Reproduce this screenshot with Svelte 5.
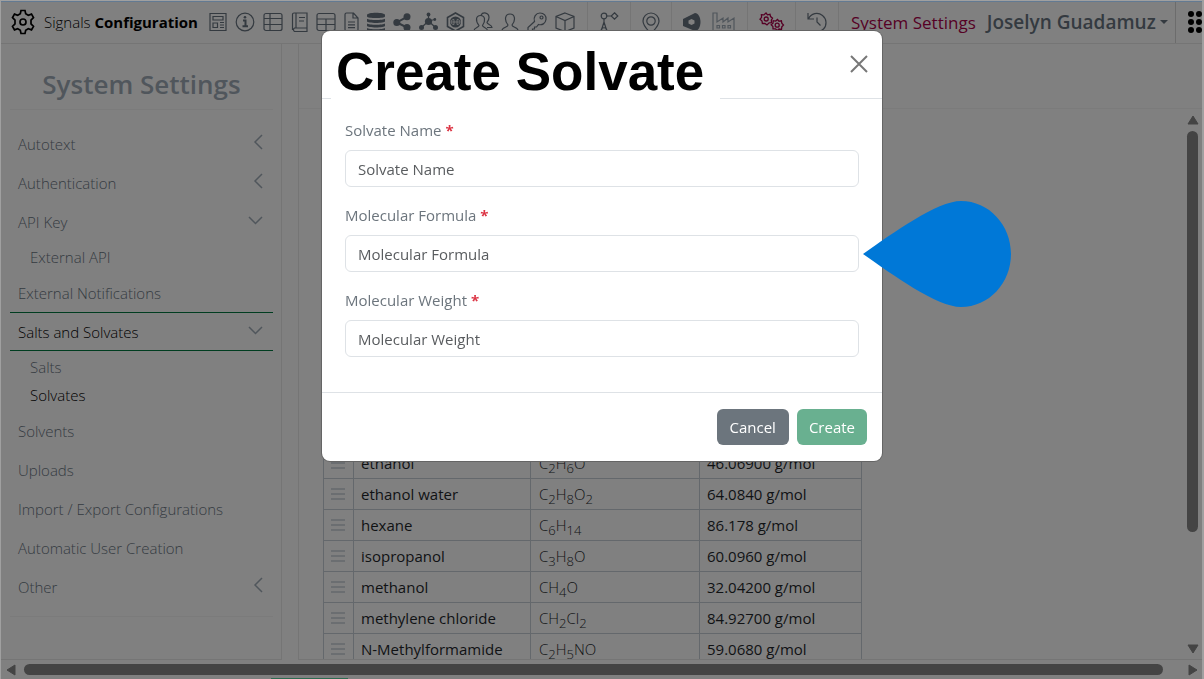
<script>
  const strip = [
    { name: 'Templates', w: 18, body: '<path d="M1 1.500h16v17H1zM4 4.500h10v3.500H4zM4 11h4.500v4.500H4zM11 10.500h4M11 13h4M11 15.500h4" />' },
    { name: 'Information', w: 20, body: '<circle cx="10" cy="10" r="8.800"/><path d="M8 8.500h2.500v5.500M7.500 14.300h5.500" stroke-width="2"/><circle cx="10" cy="5.300" r="1.300" fill="currentColor" stroke="none"/>' },
    { name: 'Tables', w: 20, body: '<rect x="1" y="1.500" width="18" height="17" rx="2"/><path d="M1 6.500h18M1 12.500h18M7 1.500v17"/>' },
    { name: 'Notebook', w: 17, body: '<path d="M3 1h13v15H3.500a2 2 0 0 0 0 3.500H16V16M1.500 18V2.500A1.500 1.500 0 0 1 3 1M5 1v15M8 5.500h6M8 9h5"/>' },
    { name: 'Worksheets', w: 20, body: '<rect x="1" y="1.500" width="18" height="17" rx="2"/><path d="M1 7h18M1 12.500h18M10 7v11.500"/>' },
    { name: 'Documents', w: 15, body: '<path d="M2.500 1H9.500l4.500 5v11.500a1.500 1.500 0 0 1-1.500 1.500h-10A1.500 1.500 0 0 1 1 17.500v-15A1.500 1.500 0 0 1 2.500 1zM9 1v5h5M4 10h7M4 12.800h7M4 15.600h7"/>' },
    { name: 'Databases', w: 18, body: '<g fill="currentColor" stroke="none"><path d="M0 3C0 0 18 0 18 3v1.500C18 6.500 0 6.500 0 4.500z"/><path d="M0 6.700c2 1.700 16 1.700 18 0v2.500c0 2.300-18 2.300-18 0z"/><path d="M0 11.400c2 1.700 16 1.700 18 0v2.300c0 2.300-18 2.300-18 0z"/><path d="M0 15.900c2 1.700 16 1.700 18 0v2c0 2.600-18 2.600-18 0z"/></g>' },
    { name: 'Sharing', w: 18, body: '<g fill="currentColor" stroke="none"><circle cx="3.800" cy="10.500" r="3.500"/><circle cx="14" cy="4.800" r="3.500"/><circle cx="14" cy="15.500" r="3.500"/></g><path d="M14 4.800 3.800 10.500 14 15.500" stroke-width="2"/>' },
    { name: 'Structures', w: 19, body: '<g fill="currentColor" stroke="none"><circle cx="9.500" cy="9.500" r="3.600"/><circle cx="9.500" cy="2.500" r="1.900"/><circle cx="2.500" cy="15.500" r="2.500"/><circle cx="16.500" cy="15.500" r="2.500"/><circle cx="15.800" cy="7.500" r="1.400"/></g><path d="M9.500 9V2.500M9.500 9l-7 6.500M9.500 9l7 6.500M9.500 9l6.300-1.500" stroke-width="1.200"/>' },
    { name: 'Compounds', w: 19, body: '<path d="m9.500 1 8 4.500v9l-8 4.500-8-4.500v-9z" stroke-width="1.600"/><circle cx="9.500" cy="10" r="5.500" fill="currentColor" stroke="none"/><path d="M8 7.500v5c-4 0-4-5 0-5zM11 7.500v5c4 0 4-5 0-5zM5 10h9" stroke="#808080" stroke-width=".8"/>' },
    { name: 'Groups', w: 20, body: '<path d="M1 18.500c0-3 5-3 5-5-4-5-3-10 1.500-10s5.500 5 2 10c0 2 5 2 5 5zM8 3c2-3.500 8-2.500 8 2.500 0 2.500-1.500 4-2 5 0 2 5 2 5 5h-5"/>' },
    { name: 'Users', w: 18, body: '<path d="M1 18.500c0-3.500 6-3 6-5.500-4-5-3-11 2-11s6 6 2 11c0 2.500 6 2 6 5.500z"/>' },
    { name: 'Access', w: 20, body: '<path d="M7.500 9.500C6 5 9 1 13 1s6.500 3 6 6.500c-.5 4-4 6-7.500 5L9.500 15H7.500v2H5.500v2H1v-3.500z"/><circle cx="14.500" cy="5.500" r="1.500"/>' },
    { name: 'Packages', w: 20, body: '<path d="m10 1 9 3.500v11.500l-9 3.500-9-3.500V4.500zM1 4.500 10 8.500l9-4M10 8.500v11"/>' }
  ];
  const groups = [
    [{ name: 'Workflow', w: 20, body: '<circle cx="5" cy="4" r="2.800"/><path d="M7.800 4H12M15.500.800 18.800 4l-3.300 3.200L12.200 4zM5 7v3M5 10l-3 9.500M5 10l3 9.500M2 19.500c0-5 6-5 6 0"/>' }],
    [{ name: 'Locations', w: 18, body: '<path d="M9 22c-3-4-8-8-8-13a8 8 0 0 1 16 0C17 14 12 18 9 22z"/><circle cx="9" cy="9" r="4.200"/>' }],
    [
      { name: 'Materials', w: 18, body: '<path d="M0 7 12 1c3 0 5.500 4 5.500 9s-2.500 9-5.500 9L0 14z" fill="currentColor" stroke="none"/><path d="m8.500 7 3 1.500v3L8.500 13l-3-1.500v-3z" fill="#808080" stroke="none"/>' },
      { name: 'Plants', w: 24, faded: true, body: '<path d="M1 19V1h4v9l6-4v4l5-4v4l6-4v13zM5 13.500h2.500v2.500H5zM10.500 13.500H13v2.500h-2.500zM16 13.500h2.500v2.500H16z"/>' }
    ],
    [{ name: 'System settings', w: 25, red: true, body: '<g stroke-width="1.300"><path d="m7 1 1.500 1.800L11 2.300l.6 2.300 1.900 1.600-1.200 2 .2 2.500-2.400.2L8 13l-2-1.600-2.600.1-.4-2.400L1 7.300l1.600-1.900-.2-2.600 2.500.1z"/><circle cx="7.200" cy="7" r="2"/><path d="m18.500 7.500 1.500 1.700 2.400-.4.400 2.400 1.700 1.800-1.700 1.800-.3 2.500-2.400-.3-1.900 1.500-1.700-1.700-2.500.1-.1-2.400-1.700-1.700 1.800-1.600.2-2.500 2.500.4z"/><circle cx="18.200" cy="13.200" r="2"/></g>' }],
    [{ name: 'History', w: 20, body: '<path d="M1 1v6h6M1.500 7C4 1 11 0 15.500 3.500s4.500 10 1 13.500-8 3.500-11 1.500M10 5.500V10l3.500 3.500"/>' }]
  ];

  const menu = [
    { label: 'Autotext', arrow: 'left' },
    { label: 'Authentication', arrow: 'left' },
    { label: 'API Key', arrow: 'down', children: ['External API'] },
    { label: 'External Notifications' },
    { label: 'Salts and Solvates', arrow: 'down', active: true, children: ['Salts', 'Solvates'] },
    { label: 'Solvents' },
    { label: 'Uploads' },
    { label: 'Import / Export Configurations' },
    { label: 'Automatic User Creation' },
    { label: 'Other', arrow: 'left' }
  ];

  const solvates = [
    ['ethanol', 'C2H6O', '46.06900 g/mol'],
    ['ethanol water', 'C2H8O2', '64.0840 g/mol'],
    ['hexane', 'C6H14', '86.178 g/mol'],
    ['isopropanol', 'C3H8O', '60.0960 g/mol'],
    ['methanol', 'CH4O', '32.04200 g/mol'],
    ['methylene chloride', 'CH2Cl2', '84.92700 g/mol'],
    ['N-Methylformamide', 'C2H5NO', '59.0680 g/mol']
  ];
  const parts = (formula) => formula.match(/\d+|\D+/g);

  const fields = [
    { id: 'name', label: 'Solvate Name' },
    { id: 'formula', label: 'Molecular Formula' },
    { id: 'weight', label: 'Molecular Weight' }
  ];
</script>

{#snippet tool(icon)}
  <button class="tool" class:red={icon.red} class:faded={icon.faded} aria-label={icon.name}>
    <svg width={icon.w} height="20" viewBox="0 0 {icon.w} 20">{@html icon.body}</svg>
  </button>
{/snippet}

<div class="page">
  <header>
    <div class="brand">
      <svg width="24" height="26" viewBox="0 0 24 26"><path d="M10 1.500h4l.7 3.300 2.600 1.500 3.200-1.200 2 3.500L20 11.200v3.600l2.500 2.600-2 3.500-3.200-1.200-2.600 1.500-.7 3.300h-4l-.7-3.300-2.600-1.500-3.200 1.200-2-3.500L4 14.800v-3.600L1.500 8.600l2-3.500 3.200 1.200 2.600-1.500z"/><circle cx="12" cy="13" r="3"/></svg>
      <span class="product">Signals <b>Configuration</b></span>
    </div>
    <nav class="tools" aria-label="Configuration areas">
      <div class="first">{#each strip as icon}{@render tool(icon)}{/each}</div>
      {#each groups as group}
        <div class="group">{#each group as icon}{@render tool(icon)}{/each}</div>
      {/each}
    </nav>
    <div class="section">System Settings</div>
    <button class="user">Joselyn Guadamuz<span class="caret"></span></button>
    <button class="apps" aria-label="Applications">
      <svg width="16" height="24" viewBox="0 0 16 24"><g fill="#000"><circle cx="3" cy="4" r="3"/><circle cx="11" cy="4" r="3"/><circle cx="3" cy="12" r="3"/><circle cx="11" cy="12" r="3"/><circle cx="3" cy="20" r="3"/><circle cx="11" cy="20" r="3"/></g></svg>
    </button>
  </header>

  <div class="body">
    <aside>
      <h2>System Settings</h2>
      <ul class="menu">
        {#each menu as item}
          <li>
            <a href="#top" class="item" class:active={item.active}>
              <span>{item.label}</span>
              {#if item.arrow === 'left'}
                <svg width="10" height="16" viewBox="0 0 10 16"><path d="M9 1 2 8l7 7"/></svg>
              {:else if item.arrow === 'down'}
                <svg width="15" height="16" viewBox="0 0 15 16"><path d="m1 5 6.500 6.500L14 5"/></svg>
              {/if}
            </a>
            {#if item.children}
              <ul class="sub">
                {#each item.children as child}
                  <li><a href="#top" class:current={child === 'Solvates'}>{child}</a></li>
                {/each}
              </ul>
            {/if}
          </li>
        {/each}
      </ul>
    </aside>
    <main>
      <div class="toolbar"></div>
      <div class="content">
        <div class="listing">
          <table>
            <tbody>
              {#each solvates as [name, formula, weight]}
                <tr>
                  <td class="grip"><svg width="14" height="14" viewBox="0 0 14 14"><path d="M0 2h14M0 7h14M0 12h14"/></svg></td>
                  <td class="name">{name}</td>
                  <td class="formula">{#each parts(formula) as part}{#if /\d/.test(part)}<sub>{part}</sub>{:else}{part}{/if}{/each}</td>
                  <td class="weight">{weight}</td>
                </tr>
              {/each}
            </tbody>
          </table>
        </div>
        <div class="vbar">
          <svg width="12" height="10" viewBox="0 0 12 10"><path d="M6 1 11 9H1z"/></svg>
          <div class="track"><div class="thumb"></div></div>
          <svg width="12" height="10" viewBox="0 0 12 10"><path d="M1 1h10L6 9z"/></svg>
        </div>
      </div>
    </main>
  </div>

  <div class="hbar">
    <svg width="10" height="12" viewBox="0 0 10 12"><path d="M9 1v10L1 6z"/></svg>
    <div class="track"><div class="thumb"></div></div>
    <svg width="10" height="12" viewBox="0 0 10 12"><path d="M1 1v10l8-5z"/></svg>
  </div>
  <div class="edge"></div>
</div>

<div class="overlay">
  <div class="dialog" role="dialog" aria-labelledby="dialog-title">
    <div class="head">
      <h1 id="dialog-title">Create Solvate</h1>
      <button class="close" aria-label="Close"><svg width="18" height="18" viewBox="0 0 18 18"><path d="m1 1 16 16M17 1 1 17"/></svg></button>
    </div>
    <form>
      {#each fields as field}
        <div class="field">
          <label for={field.id}>{field.label} <b>*</b></label>
          <input id={field.id} type="text" placeholder={field.label} />
        </div>
      {/each}
    </form>
    <div class="foot">
      <button class="cancel">Cancel</button>
      <button class="create">Create</button>
    </div>
    <svg class="pointer" width="148" height="108" viewBox="0 0 148 108"><path d="M0 54C30 33 74 1 98 1c28 0 50 24 50 53s-22 53-50 53C74 107 30 75 0 54z"/></svg>
  </div>
</div>

<style>
  :global(body) { margin: 0; background: #808080; font-family: "Open Sans", "Noto Sans", sans-serif; }
  .page, .overlay, .page *, .overlay * { box-sizing: border-box; }
  button { font: inherit; color: inherit; border: 0; padding: 0; background: none; cursor: pointer; }
  a { color: inherit; text-decoration: none; }
  ul { list-style: none; margin: 0; padding: 0; }
  svg { display: block; flex: none; fill: none; stroke: currentColor; }
  .page { height: 100vh; display: flex; flex-direction: column; overflow: hidden; color: #343a40; border: 1px solid #a0a0a0; border-right-width: 2px; border-bottom: 0; }
  header { flex: none; height: 43px; display: flex; align-items: stretch; border-top: 1px solid #637a92; border-bottom: 1px solid #757575; white-space: nowrap; }
  .brand { display: flex; align-items: center; gap: 9px; padding: 0 0 2px 10px; width: 208px; color: #000; }
  .brand svg { stroke-width: 1.700; }
  .product { font-size: 15px; font-weight: 300; }
  .product b { font-weight: 700; }
  .tools { display: flex; color: #343a40; }
  .first, .group { display: flex; align-items: center; gap: 8px; padding-bottom: 2px; }
  .first { padding-right: 12px; }
  .group { padding: 0 11px 2px; gap: 11px; border-left: 1px solid #757575; }
  .tool svg { stroke-width: 1.200; overflow: visible; }
  .red { color: #560025; }
  .faded { color: #50565c; }
  .section { display: flex; align-items: center; padding-left: 12px; border-left: 1px solid #757575; color: #560025; font-size: 17px; }
  .user { display: flex; align-items: center; gap: 4px; margin-left: 11px; padding-bottom: 2px; font-size: 19px; font-weight: 600; }
  .caret { border: 4px solid transparent; border-top-color: #343a40; border-bottom: 0; }
  .apps { margin-left: auto; width: 27px; padding: 0 0 2px 12px; border-left: 1px solid #6c6c6c; overflow: hidden; }
  .apps svg { stroke: none; }
  .body { flex: 1; min-height: 0; display: flex; gap: 16px; }
  aside { flex: none; width: 281px; padding: 0 8px 0 9px; border-right: 1px solid #757575; border-bottom: 1px solid #757575; }
  h2 { margin: 0 0 14px; height: 66px; padding-top: 16px; border-bottom: 1px solid #7b7b7b; text-align: center; color: #50565c; font-size: 26px; line-height: 48px; font-weight: 600; }
  .menu { font-size: 15px; font-weight: 300; padding-bottom: 10px; border-bottom: 1px solid #7b7b7b; }
  .item { display: flex; justify-content: space-between; align-items: center; height: 39px; padding: 0 10px 0 8px; }
  .item svg { color: #50565c; stroke-width: 1.500; margin-top: -4px; }
  .active { color: #000; border: solid #003d20; border-width: 1px 0; }
  .sub { padding: 2px 0 2px 20px; }
  .sub a { display: block; line-height: 28px; }
  .sub .current { color: #000; }
  main { flex: 1; min-width: 0; display: flex; flex-direction: column; border: solid #757575; border-width: 0 0 1px 1px; }
  .toolbar { flex: none; height: 65px; border-bottom: 1px solid #7b7b7b; }
  .content { flex: 1; min-height: 0; display: flex; justify-content: space-between; }
  .listing { padding: 338px 0 0 24px; overflow: hidden; }
  table { border-collapse: collapse; color: #101214; font-size: 15px; }
  td { height: 31px; padding: 0 7px 1px; border: 1px solid #64686c; line-height: 20px; white-space: nowrap; }
  .grip { width: 30px; color: #64686c; }
  .grip svg { stroke-width: 1.500; }
  .name { width: 177px; }
  .formula { width: 169px; padding-left: 8px; font-weight: 300; }
  sub { font-size: 13px; line-height: 0; }
  .weight { width: 162px; }
  .vbar { flex: none; width: 19px; display: flex; flex-direction: column; align-items: center; gap: 6px; padding: 6px 0 5px; }
  .vbar svg, .hbar svg { fill: #444; stroke: #444; stroke-linejoin: round; }
  .track { flex: 1; }
  .thumb { background: #444; border-radius: 6px; }
  .vbar .thumb { width: 11px; height: 79%; }
  .hbar { flex: none; height: 18px; display: flex; align-items: center; gap: 8px; padding: 1px 4px 0 5px; }
  .hbar .thumb { height: 11px; width: 98.500%; }
  .edge { flex: none; height: 1px; margin: 0 0 0 270px; width: 77px; background: #2b6b50; box-shadow: -270px 1px #a0a0a0, 0 1px #a0a0a0; }
  .overlay { position: fixed; inset: 0; display: flex; justify-content: center; align-items: flex-start; padding-top: 31px; }
  .dialog { position: relative; width: 560px; background: #fff; border-radius: 8px; box-shadow: 0 0 0 1px #656565; }
  .head { height: 68px; display: flex; align-items: flex-start; justify-content: space-between; padding: 0 14px 0 9px; border-bottom: 1px solid #dee2e6; }
  h1 { margin: 0; height: 68px; padding: 0 16px 0 5px; background: #fff; color: #000; font: bold 53px/82px "Liberation Sans", Arial, sans-serif; }
  .close { margin-top: 24px; color: #777; }
  .close svg { stroke-width: 2; }
  form { display: flex; flex-direction: column; gap: 15px; padding: 18px 23px 35px; }
  .field { display: flex; flex-direction: column; gap: 6px; }
  label { color: #6c757d; font-size: 15px; line-height: 27px; }
  label b { color: #dc3545; }
  input { width: 100%; height: 37px; padding: 0 12px; border: 1px solid #dee2e6; border-radius: 6px; background: #fff; font: 15px "Open Sans", sans-serif; }
  input::placeholder { color: #595c5f; opacity: 1; }
  .foot { display: flex; justify-content: flex-end; gap: 8px; padding: 16px 15px; border-top: 1px solid #dee2e6; color: #fff; font-size: 15px; }
  .foot button { height: 36px; padding: 0 12px; border-radius: 6px; }
  .foot .cancel { background: #6c757d; padding: 0 13px; }
  .create { background: #69b090; }
  .pointer { position: absolute; left: 541px; top: 169px; fill: #0078d7; stroke: none; }
</style>
